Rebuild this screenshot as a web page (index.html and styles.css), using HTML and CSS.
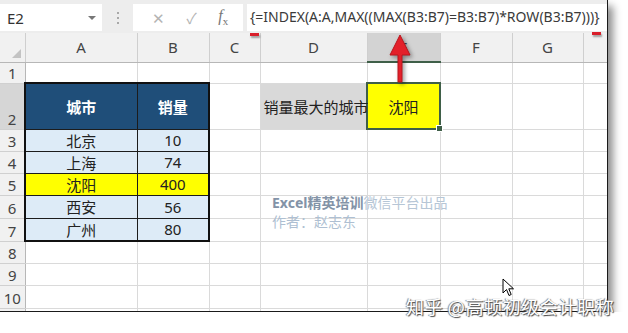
FILE: index.html
```html
<!DOCTYPE html>
<html lang="zh-CN">
<head>
  <meta charset="UTF-8" />
  <title>INDEX MAX ROW</title>
  <link rel="stylesheet" href="styles.css">
</head>
<body>
  <div class="window">
    <!-- formula bar -->
    <div class="formula-bar">
      <div class="name-box">
        <span>E2</span>
        <span class="caret"></span>
      </div>
      <div class="grip"><i></i><i></i><i></i></div>
      <div class="fx-buttons">
        <span class="btn">✕</span>
        <span class="btn">✓</span>
        <span class="btn fx"><i>f</i><sub>x</sub></span>
      </div>
      <div class="formula">{=INDEX(A:A,MAX((MAX(B3:B7)=B3:B7)*ROW(B3:B7)))}</div>
    </div>

    <table class="sheet">
      <colgroup>
        <col style="width:25px"><col style="width:112px"><col style="width:72px">
        <col style="width:51px"><col style="width:107px"><col style="width:73px">
        <col style="width:72px"><col style="width:71px"><col style="width:24px">
      </colgroup>
      <tr class="col-head">
        <th class="corner"><span class="tri"></span></th>
        <th>A</th><th>B</th><th>C</th><th>D</th><th class="sel">E</th><th>F</th><th>G</th><th></th>
      </tr>
      <tr class="r1">
        <th class="row-head">1</th><td></td><td></td><td></td><td></td><td></td><td></td><td></td><td></td>
      </tr>
      <tr class="r2">
        <th class="row-head sel">2</th>
        <td class="t tt tl head">城市</td>
        <td class="t tt tr head">销量</td>
        <td></td>
        <td class="label">销量最大的城市</td>
        <td class="result">沈阳<span class="handle"></span></td>
        <td></td><td></td><td></td>
      </tr>
      <tr class="r3">
        <th class="row-head">3</th><td class="t tl">北京</td><td class="t tr">10</td><td></td><td></td><td></td><td></td><td></td><td></td>
      </tr>
      <tr class="r4">
        <th class="row-head">4</th><td class="t tl">上海</td><td class="t tr">74</td><td></td><td></td><td></td><td></td><td></td><td></td>
      </tr>
      <tr class="r5">
        <th class="row-head">5</th><td class="t tl hl">沈阳</td><td class="t tr hl">400</td><td></td><td></td><td></td><td></td><td></td><td></td>
      </tr>
      <tr class="r6">
        <th class="row-head">6</th><td class="t tl">西安</td><td class="t tr">56</td><td></td><td></td><td></td><td></td><td></td><td></td>
      </tr>
      <tr class="r7">
        <th class="row-head">7</th><td class="t tl tb">广州</td><td class="t tr tb">80</td><td></td><td></td><td></td><td></td><td></td><td></td>
      </tr>
      <tr class="r8">
        <th class="row-head">8</th><td></td><td></td><td></td><td></td><td></td><td></td><td></td><td></td>
      </tr>
      <tr class="r9">
        <th class="row-head">9</th><td></td><td></td><td></td><td></td><td></td><td></td><td></td><td></td>
      </tr>
      <tr class="r10">
        <th class="row-head">10</th><td></td><td></td><td></td><td></td><td></td><td></td><td></td><td></td>
      </tr>
      <tr class="r11">
        <th class="row-head"></th><td></td><td></td><td></td><td></td><td></td><td></td><td></td><td></td>
      </tr>
    </table>

    <!-- annotations drawn over the sheet -->
    <span class="mark mark-left"></span>
    <span class="mark mark-right"></span>
    <svg class="arrow" width="30" height="52" viewBox="0 0 30 52">
      <polygon points="15,1 25,21 17,21 17,48 13,48 13,21 5,21" fill="#e3202a" stroke="#b8141c" stroke-width="1"/>
    </svg>

    <div class="credit">
      <div><b>Excel精英培训</b><span>微信平台出品</span></div>
      <div class="author">作者：赵志东</div>
    </div>

    <svg class="cursor" width="13" height="19" viewBox="0 0 13 19">
      <path d="M1 1 L1 15 L4.5 11.5 L7 17.5 L9.2 16.5 L6.8 10.8 L11.5 10.8 Z" fill="#fff" stroke="#000" stroke-width="1" stroke-linejoin="round"/>
    </svg>
  </div>

  <div class="zhihu">知乎 @高顿初级会计职称</div>
</body>
</html>
```

FILE: styles.css
```css
body {
  margin: 0;
  background: #fff;
  font-family: "Noto Sans", "Noto Sans CJK SC", sans-serif;
  color: #222;
}
.window {
  position: relative;
  box-sizing: border-box;
  width: 608px;
  height: 312px;
  overflow: hidden;
  background: #fff;
  border-right: 1px solid #1a1a1a;
  border-bottom: 1px solid #1a1a1a;
  box-shadow: 5px 6px 8px rgba(0, 0, 0, 0.45);
}

/* formula bar */
.formula-bar {
  display: flex;
  align-items: center;
  height: 33px;
  background: #ededed;
  box-sizing: border-box;
  padding-top: 2px;
}
.name-box {
  display: flex;
  align-items: center;
  justify-content: space-between;
  box-sizing: border-box;
  width: 102px;
  height: 27px;
  padding: 0 6px 0 7px;
  background: #fff;
  font-size: 15px;
  color: #333;
}
.caret {
  width: 0;
  height: 0;
  border-left: 4px solid transparent;
  border-right: 4px solid transparent;
  border-top: 4px solid #777;
}
.grip {
  display: flex;
  flex-direction: column;
  gap: 3px;
  width: 31px;
  align-items: center;
}
.grip i {
  width: 2px;
  height: 2px;
  background: #a8a8a8;
}
.fx-buttons {
  display: flex;
  align-items: center;
  justify-content: space-around;
  box-sizing: border-box;
  width: 110px;
  height: 27px;
  padding: 0 4px 0 8px;
  background: #fff;
  color: #b4b4b4;
  font-size: 15px;
}
.fx-buttons .fx {
  color: #777;
  font-family: "Liberation Serif", serif;
  font-size: 16px;
}
.fx-buttons .fx sub {
  font-size: 11px;
}
.formula {
  flex: 1;
  box-sizing: border-box;
  height: 27px;
  margin-left: 4px;
  padding: 3px 0 0 3px;
  background: #fff;
  font-size: 14px;
  color: #3a3a3a;
  white-space: nowrap;
}

/* sheet grid */
.sheet {
  border-collapse: collapse;
  table-layout: fixed;
  width: 607px;
  font-size: 15px;
}
.sheet td {
  border: 1px solid #dadada;
  padding: 0;
  text-align: center;
  vertical-align: middle;
}
.sheet th {
  padding: 0;
  font-weight: normal;
  color: #444;
  background: #f1f1f1;
}
.col-head { height: 29px; }
.col-head th {
  border-right: 1px solid #cfcfcf;
  border-bottom: 1px solid #b7b7b7;
  font-size: 15px;
  vertical-align: middle;
}
.col-head th.sel {
  background: #d3d3d3;
  border-bottom: 2px solid #3f5f48;
}
.corner { position: relative; }
.tri {
  position: absolute;
  right: 4px;
  bottom: 4px;
  width: 0;
  height: 0;
  border-left: 9px solid transparent;
  border-bottom: 9px solid #c3c3c3;
}
.row-head {
  border-right: 1px solid #b7b7b7;
  border-bottom: 1px solid #d0d0d0;
  font-size: 15px;
  text-align: center;
  vertical-align: bottom;
  line-height: 20px;
}
.row-head.sel { background: #d6d6d6; }

.r1 { height: 19px; }
.r2 { height: 46px; }
.r3, .r4, .r8, .r9 { height: 22px; }
.r5 { height: 21px; }
.r6, .r7, .r10 { height: 23px; }
.r11 { height: 6px; }

/* data table A2:B7 */
.sheet td.t {
  border: 1px solid #1c1c1c;
  background: #ddebf7;
}
.sheet td.tt { border-top: 2px solid #111; }
.sheet td.tl { border-left: 2px solid #111; }
.sheet td.tr { border-right: 2px solid #111; }
.sheet td.tb { border-bottom: 2px solid #111; }
.sheet td.head {
  background: #1f4e79;
  color: #fff;
  font-weight: bold;
}
.sheet td.hl { background: #ffff00; }

.sheet td.label {
  background: #d9d9d9;
  text-align: left;
  padding-left: 3px;
  white-space: nowrap;
  overflow: visible;
}
.sheet td.result {
  position: relative;
  background: #ffff00;
  border: 2px solid #3f5f48;
}
.handle {
  position: absolute;
  right: -4px;
  bottom: -4px;
  width: 5px;
  height: 5px;
  background: #3f5f48;
  border: 1px solid #fff;
}

/* overlays */
.mark {
  position: absolute;
  width: 9px;
  height: 3px;
  background: #d91e2a;
  box-shadow: 1px 2px 2px rgba(0, 0, 0, 0.35);
}
.mark-left { left: 250px; top: 33px; }
.mark-right { left: 592px; top: 32px; }
.arrow {
  position: absolute;
  left: 385px;
  top: 34px;
  filter: drop-shadow(2px 2px 2px rgba(0, 0, 0, 0.4));
}
.credit {
  position: absolute;
  left: 272px;
  top: 193px;
  font-size: 14px;
  line-height: 19px;
  color: #b6c6d6;
}
.credit b { color: #8393a7; }
.credit .author { color: #aebfd2; }
.cursor {
  position: absolute;
  left: 502px;
  top: 278px;
}
.zhihu {
  position: absolute;
  left: 406px;
  top: 293px;
  font-family: "Noto Sans CJK SC", sans-serif;
  font-size: 18px;
  color: #fff;
  letter-spacing: 0.6px;
  text-shadow: 1px 1px 1px #444, -1px 0 1px #777;
}
```
